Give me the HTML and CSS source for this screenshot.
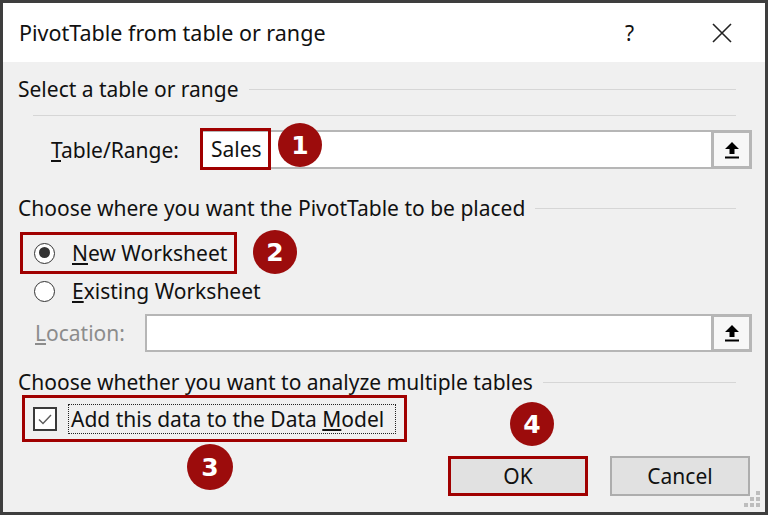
FILE: index.html
```html
<!DOCTYPE html>
<html>
<head>
<meta charset="utf-8">
<link rel="stylesheet" href="styles.css">
</head>
<body>
<div class="dialog">
  <div class="titlebar">
    <span class="title">PivotTable from table or range</span>
    <span class="help">?</span>
    <svg class="close" width="22" height="22" viewBox="0 0 22 22"><path d="M2 2 L20 20 M20 2 L2 20" stroke="#222" stroke-width="1.6" fill="none"/></svg>
  </div>
  <div class="content">
    <div class="heading"><span>Select a table or range</span><div class="rule"></div></div>
    <div class="subrule"></div>
    <div class="row table-row">
      <span class="label"><u>T</u>able/Range:</span>
      <div class="field wide-field">
        <span class="value">Sales</span>
        <div class="pick"><svg width="18" height="20" viewBox="0 0 18 20"><path d="M9 2 L2 9 H6.5 V14 H11.5 V9 H16 Z" fill="#000"/><rect x="2" y="16.5" width="14" height="2" fill="#000"/></svg></div>
      </div>
    </div>
    <div class="heading h2"><span>Choose where you want the PivotTable to be placed</span><div class="rule"></div></div>
    <div class="radio-row highlight">
      <span class="radio checked"></span><span class="opt"><u>N</u>ew Worksheet</span>
    </div>
    <div class="radio-row plain">
      <span class="radio"></span><span class="opt"><u>E</u>xisting Worksheet</span>
    </div>
    <div class="row location-row">
      <span class="label disabled"><u>L</u>ocation:</span>
      <div class="field loc-field">
        <span class="value"></span>
        <div class="pick"><svg width="18" height="20" viewBox="0 0 18 20"><path d="M9 2 L2 9 H6.5 V14 H11.5 V9 H16 Z" fill="#000"/><rect x="2" y="16.5" width="14" height="2" fill="#000"/></svg></div>
      </div>
    </div>
    <div class="heading h3"><span>Choose whether you want to analyze multiple tables</span><div class="rule"></div></div>
    <div class="check-row">
      <span class="checkbox"><svg width="20" height="20" viewBox="0 0 20 20"><path d="M4 10.5 L8 14.5 L16 6" stroke="#5a5a5a" stroke-width="1.4" fill="none"/></svg></span>
      <span class="check-label">Add this data to the Data <u>M</u>odel</span>
    </div>
    <div class="buttons">
      <div class="btn ok">OK</div>
      <div class="btn cancel">Cancel</div>
    </div>
  </div>
  <div class="mark-box"></div>
  <div class="badge b1">1</div>
  <div class="badge b2">2</div>
  <div class="badge b3">3</div>
  <div class="badge b4">4</div>
  <svg class="grip" width="18" height="18" viewBox="0 0 18 18">
    <rect x="13" y="1" width="4" height="4" fill="#bdbdbd"/>
    <rect x="7" y="7" width="4" height="4" fill="#bdbdbd"/><rect x="13" y="7" width="4" height="4" fill="#bdbdbd"/>
    <rect x="1" y="13" width="4" height="4" fill="#bdbdbd"/><rect x="7" y="13" width="4" height="4" fill="#bdbdbd"/><rect x="13" y="13" width="4" height="4" fill="#bdbdbd"/>
  </svg>
</div>
</body>
</html>
```
FILE: styles.css
```css
html, body { margin: 0; padding: 0; }
body { width: 768px; height: 515px; overflow: hidden; background: #f0f0f0; }
.dialog {
  position: relative;
  width: 768px; height: 515px;
  box-sizing: border-box;
  border: 3px solid #3e3e3e;
  background: #f0f0f0;
  font-family: "Noto Sans", "Open Sans", sans-serif;
  font-size: 21px;
  color: #111;
}
.titlebar {
  height: 59px;
  background: #fff;
  display: flex;
  align-items: center;
}
.title { margin-left: 16px; font-size: 21.5px; flex: 1; }
.help { font-size: 21px; margin-right: 77px; }
.close { margin-right: 32px; }
.content { padding: 0 13px 0 15px; }
.heading {
  display: flex; align-items: center;
  height: 26px; line-height: 26px;
  margin-top: 14px;
  white-space: nowrap;
}
.heading .rule { flex: 1; height: 1px; background: #d6d6d6; margin: 0 16px 0 10px; }
.subrule { height: 1px; background: #d6d6d6; margin: 13px 16px 0 15px; }
.row { display: flex; align-items: center; }
.table-row { margin-top: 14px; height: 39px; }
.label { white-space: nowrap; }
.table-row .label { margin-left: 33px; width: 150px; }
.field {
  position: relative;
  flex: 1; height: 39px;
  box-sizing: border-box;
  border: 2px solid #b6b6b6;
  background: #fff;
  display: flex; align-items: stretch;
}
.field .value { flex: 1; padding-left: 8px; line-height: 35px; }
.pick {
  width: 41px; box-sizing: border-box;
  margin: -2px -2px -2px 0;
  border: 3px solid #b6b6b6;
  background: #f7f7f7;
  display: flex; align-items: center; justify-content: center;
}
.h2 { margin-top: 26px; }
.radio-row { display: flex; align-items: center; box-sizing: border-box; white-space: nowrap; }
.radio-row.highlight {
  margin-top: 11px; margin-left: 2px;
  width: 217px; height: 42px;
  border: 3px solid #a00000;
  padding-left: 11px;
}
.radio-row.plain { height: 34px; padding-left: 16px; }
.radio {
  width: 21px; height: 21px; box-sizing: border-box;
  border: 1.5px solid #333; border-radius: 50%;
  background: #fff; position: relative;
}
.radio.checked::after {
  content: ""; position: absolute; left: 3.5px; top: 3.5px;
  width: 11px; height: 11px; border-radius: 50%; background: #333;
}
.opt { margin-left: 17px; }
.location-row { margin-top: 6px; height: 38px; }
.location-row .label { margin-left: 17px; width: 110px; }
.loc-field { height: 38px; }
.disabled { color: #8c8c8c; }
.h3 { margin-top: 17px; }
.check-row {
  display: flex; align-items: center;
  margin-left: 4px; width: 385px; height: 47px;
  box-sizing: border-box;
  border: 3px solid #a00000;
  padding-left: 8px;
  white-space: nowrap;
}
.checkbox {
  width: 24px; height: 24px; box-sizing: border-box;
  border: 2px solid #3a3a3a; background: #fff;
  display: flex; align-items: center; justify-content: center;
}
.check-label {
  margin-left: 11px;
  width: 328px; height: 30px; line-height: 28px;
  box-sizing: border-box;
  border: 1px dotted #222;
  padding-left: 2px;
}
.buttons { display: flex; justify-content: flex-end; gap: 22px; margin-top: 14px; padding-right: 2px; }
.btn {
  width: 140px; height: 40px; box-sizing: border-box;
  background: #e1e1e1;
  display: flex; align-items: center; justify-content: center;
}
.btn.ok { border: 3px solid #a00000; }
.btn.cancel { border: 2px solid #adadad; }
.mark-box {
  position: absolute; left: 197px; top: 125px;
  width: 71px; height: 42px; box-sizing: border-box;
  border: 3px solid #a00000;
}
.badge {
  position: absolute;
  width: 44px; height: 44px; border-radius: 50%;
  background: #9c0c0c;
  color: #fff; font-weight: bold; font-size: 25px;
  display: flex; align-items: center; justify-content: center;
  font-family: "DejaVu Sans", sans-serif;
}
.b1 { left: 275px; top: 120px; }
.b2 { left: 250px; top: 227px; }
.b3 { left: 184px; top: 441px; width: 46px; height: 46px; }
.b4 { left: 507px; top: 399px; }
.grip { position: absolute; right: 4px; bottom: 4px; }
```
